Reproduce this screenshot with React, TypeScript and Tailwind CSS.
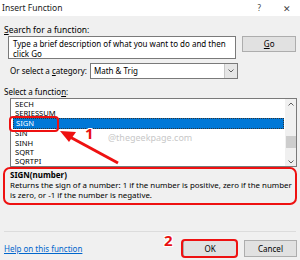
import React from "react";

const items = ["SECH", "SERIESSUM", "SIGN", "SIN", "SINH", "SQRT", "SQRTPI"];

export default function App() {
  return (
    <div
      className="relative w-[300px] h-[260px] overflow-hidden bg-[#f0f0f0] text-[8px] text-[#000] leading-none"
      style={{ fontFamily: '"Noto Sans", "Open Sans", sans-serif' }}
    >
      {/* title bar */}
      <div className="h-[16px] bg-white flex items-center justify-between pl-[2px] pr-[9px]">
        <span className="text-[8.5px] text-[#222]">Insert Function</span>
        <div className="flex items-center gap-[22px] text-[#444]">
          <span className="text-[8px]">?</span>
          <span className="text-[9px]">✕</span>
        </div>
      </div>

      <div className="px-[4px]">
        <div className="h-[20px] flex items-end pb-[2px]">
          <span className="text-[8.5px]"><u>S</u>earch for a function:</span>
        </div>
        <div className="flex items-start ml-[4px] h-[24px]">
          <div className="w-[230px] h-[23px] bg-white border border-[#7a7a7a] px-[4px] pt-[2px] leading-[10px]">
            Type a brief description of what you want to do and then click Go
          </div>
          <div className="ml-[6px] w-[54px] h-[16px] bg-[#e1e1e1] border border-[#adadad] flex items-center justify-center">
            <span><u>G</u>o</span>
          </div>
        </div>
        <div className="flex items-center ml-[6px] mt-[2px] h-[17px]">
          <span>Or select a <u>c</u>ategory:</span>
          <div className="ml-[3px] flex-1 mr-[58px] h-[16px] bg-white border border-[#7a7a7a] flex items-center">
            <span className="flex-1 pl-[3px]">Math &amp; Trig</span>
            <div className="w-[13px] h-full bg-[#e6e6e6] border-l border-[#c8c8c8] flex items-center justify-center">
              <svg width="6" height="4" viewBox="0 0 6 4"><path d="M0.5 0.5 L3 3 L5.5 0.5" fill="none" stroke="#606060" strokeWidth="1" /></svg>
            </div>
          </div>
        </div>
        <div className="h-[19px] flex items-end pb-[2px]">
          <span>Select a functio<u>n</u>:</span>
        </div>
        <div className="ml-[6px] w-[287px] h-[69px] bg-white border border-[#7a7a7a] flex">
          <div className="flex-1 pt-[1px] pl-[2px] pr-[1px] overflow-hidden text-[7.6px] leading-[9px]">
            {items.map((it) => (
              <div
                key={it}
                className={
                  "flex items-center pl-[2px] " +
                  (it === "SIGN"
                    ? "bg-[#0078d7] text-white h-[11px] border border-dotted border-[#333]"
                    : "h-[9.2px]")
                }
              >
                {it}
              </div>
            ))}
          </div>
          <div className="w-[11px] flex flex-col items-center bg-[#f0f0f0] pt-[3px] pb-[2px]">
            <svg width="6" height="4" viewBox="0 0 6 4"><path d="M0.5 3.5 L3 1 L5.5 3.5" fill="none" stroke="#606060" strokeWidth="1" /></svg>
            <div className="w-[10px] h-[12px] bg-[#cdcdcd] mt-[30px]" />
            <div className="flex-1" />
            <svg width="6" height="4" viewBox="0 0 6 4"><path d="M0.5 0.5 L3 3 L5.5 0.5" fill="none" stroke="#606060" strokeWidth="1" /></svg>
          </div>
        </div>
        <div className="ml-[6px] -mr-[2px] pt-[3px] leading-[10px]">
          <div className="font-bold">SIGN(number)</div>
          <div className="text-[7.9px]">
            Returns the sign of a number: 1 if the number is positive, zero if the number is zero, or -1 if the number is negative.
          </div>
        </div>
      </div>

      {/* separator and bottom */}
      <div className="absolute left-[4px] right-[4px] top-[231px] h-px bg-[#dcdcdc]" />
      <div className="absolute left-[4px] right-[3px] top-[240px] flex items-center">
        <span className="text-[#0066cc] underline">Help on this function</span>
        <div className="flex-1" />
        <div className="w-[54px] h-[17px] bg-[#e1e1e1] border border-[#adadad] flex items-center justify-center">OK</div>
        <div className="ml-[7px] w-[53px] h-[17px] bg-[#e1e1e1] border border-[#adadad] flex items-center justify-center">Cancel</div>
      </div>

      {/* annotations */}
      <div className="absolute left-[9px] top-[116px] w-[50px] h-[16px] border-2 border-[#ee1111] rounded-[4px]" />
      <div className="absolute left-[3px] top-[167px] w-[294px] h-[38px] border-2 border-[#ee1111] rounded-[7px]" />
      <div className="absolute left-[181px] top-[239px] w-[57px] h-[19px] border-2 border-[#ee1111] rounded-[4px]" />
      <div className="absolute left-[108px] top-[133px] text-[9px] text-[#c8c8c8]">@thegeekpage.com</div>
      <svg className="absolute left-0 top-0" width="300" height="260">
        <line x1="118" y1="163" x2="70" y2="137" stroke="#ee1111" strokeWidth="3" />
        <polygon points="60,131 76,132 69,142" fill="#ee1111" />
      </svg>
      <div
        className="absolute left-[85px] top-[126px] text-[15px] font-bold text-[#e81010]"
        style={{ textShadow: "1px 1px 0 #fff, -1px -1px 0 #fff, 1px -1px 0 #fff, -1px 1px 0 #fff" }}
      >
        1
      </div>
      <div
        className="absolute left-[164px] top-[233px] text-[15px] font-bold text-[#e81010]"
        style={{ textShadow: "1px 1px 0 #fff, -1px -1px 0 #fff, 1px -1px 0 #fff, -1px 1px 0 #fff" }}
      >
        2
      </div>
    </div>
  );
}
